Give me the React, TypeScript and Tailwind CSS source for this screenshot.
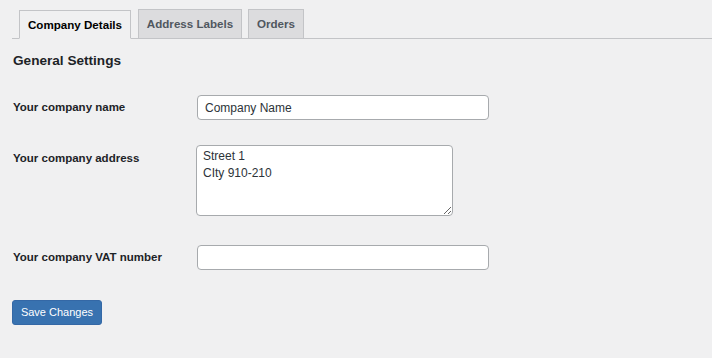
import React from 'react';

const font = { fontFamily: '"Liberation Sans", Arial, sans-serif' };

export default function App() {
  return (
    <div className="w-[712px] h-[358px] bg-[#f0f0f1] text-[#1d2327] overflow-hidden" style={font}>
      <div className="pl-[12px]">
        {/* Tabs */}
        <div className="flex items-end pt-[10px] pl-[7px] border-b border-[#c3c4c7] h-[39px]">
          <div className="h-[29px] w-[112px] justify-center flex items-center text-[11.6px] font-bold text-black bg-[#f0f0f1] border border-[#c3c4c7] border-b-[#f0f0f1] -mb-px">
            Company Details
          </div>
          <div className="ml-[7px] h-[29px] w-[104px] justify-center flex items-center text-[11.6px] font-bold text-[#50575e] bg-[#dcdcde] border border-[#c3c4c7] border-b-0">
            Address Labels
          </div>
          <div className="ml-[6px] h-[29px] w-[56px] justify-center flex items-center text-[11.6px] font-bold text-[#50575e] bg-[#dcdcde] border border-[#c3c4c7] border-b-0">
            Orders
          </div>
        </div>

        <h2 className="mt-[13px] text-[13.6px] font-bold leading-[18px] pl-px">General Settings</h2>

        {/* Form */}
        <div className="mt-[25px] flex flex-col">
          <div className="flex items-center h-[25px]">
            <label className="w-[185px] text-[11.5px] font-bold pl-px">Your company name</label>
            <input
              defaultValue="Company Name"
              className="w-[292px] h-[25px] bg-white border border-[#a7aaad] rounded-[4px] px-[7px] text-[12px] text-[#2c3338] outline-none"
            />
          </div>

          <div className="flex items-start mt-[25px]">
            <label className="w-[184px] text-[11.5px] font-bold pl-px pt-[5px]">Your company address</label>
            <textarea
              defaultValue={'Street 1\nCIty 910-210'}
              className="w-[257px] h-[71px] bg-white border border-[#a7aaad] rounded-[4px] px-[6px] py-[2px] text-[12px] leading-[17px] text-[#2c3338] outline-none resize-y"
            />
          </div>

          <div className="flex items-center h-[25px] mt-[29px]">
            <label className="w-[185px] text-[11.5px] font-bold pl-px">Your company VAT number</label>
            <input className="w-[292px] h-[25px] bg-white border border-[#a7aaad] rounded-[4px] px-[7px] text-[12px] outline-none" />
          </div>

          <div className="mt-[29px]">
            <button className="h-[25px] w-[90px] rounded-[3px] bg-[#3872b0] border border-[#3468a6] text-white text-[11px]">
              Save Changes
            </button>
          </div>
        </div>
      </div>
    </div>
  );
}
